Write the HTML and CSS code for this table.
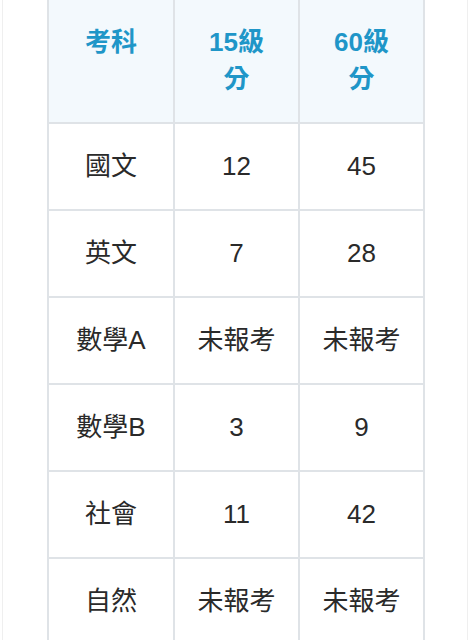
FILE: index.html
```html
<!DOCTYPE html>
<html lang="zh-Hant">
<head>
<meta charset="utf-8">
<title>級分表</title>
<link rel="stylesheet" href="styles.css">
</head>
<body>
<div class="page">
  <table class="scores">
    <colgroup>
      <col class="c1"><col class="c2"><col class="c3">
    </colgroup>
    <thead>
      <tr>
        <th>考科</th>
        <th>15級<br>分</th>
        <th>60級<br>分</th>
      </tr>
    </thead>
    <tbody>
      <tr><td>國文</td><td>12</td><td>45</td></tr>
      <tr><td>英文</td><td>7</td><td>28</td></tr>
      <tr><td>數學A</td><td>未報考</td><td>未報考</td></tr>
      <tr><td>數學B</td><td>3</td><td>9</td></tr>
      <tr><td>社會</td><td>11</td><td>42</td></tr>
      <tr><td>自然</td><td>未報考</td><td>未報考</td></tr>
    </tbody>
  </table>
</div>
</body>
</html>
```

FILE: styles.css
```css
html, body {
  margin: 0;
  padding: 0;
  background: #ffffff;
}

body {
  font-family: "Liberation Sans", "Noto Sans CJK TC", sans-serif;
  overflow: hidden;
}

.page {
  margin: 0 3px 0 2px;
  border-left: 1px solid #efefef;
  border-right: 1px solid #efefef;
  padding-left: 44px;
  min-height: 640px;
}

.scores {
  border-collapse: separate;
  border-spacing: 0;
  table-layout: fixed;
  width: 378px;
  border-left: 2px solid #dfe3e7;
}

.scores .c1 { width: 126px; }
.scores .c2 { width: 125px; }
.scores .c3 { width: 125px; }

.scores th,
.scores td {
  border-right: 2px solid #dfe3e7;
  border-bottom: 2px solid #dfe3e7;
  padding: 24px 8px;
  text-align: center;
  vertical-align: middle;
  font-size: 26px;
  line-height: 37px;
}

.scores th {
  background: #f3f9fd;
  color: #1f96c8;
  font-weight: 700;
  vertical-align: top;
}

.scores td {
  color: #2a2a2a;
  font-weight: 400;
}
```
